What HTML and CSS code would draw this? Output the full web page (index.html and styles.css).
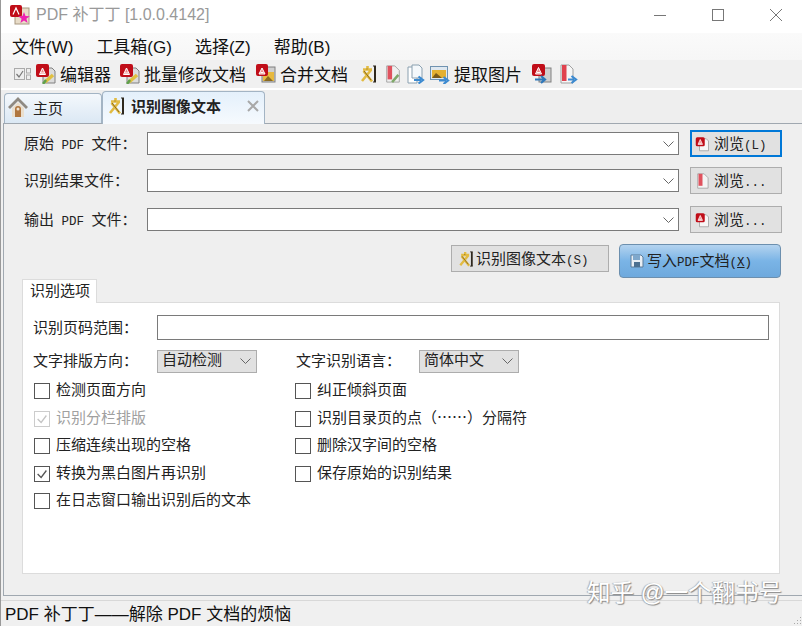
FILE: index.html
```html
<!DOCTYPE html>
<html>
<head>
    <title>PDF 补丁丁</title>
    <link rel="stylesheet" href="styles.css">
</head>
<body>
    <svg class="defs" width="0" height="0">
        <symbol id="ico-pdf" viewBox="0 0 20 20">
            <path d="M6 3h9l3 3v13H6z" fill="#f6f6f6" stroke="#9a9a9a"/>
            <rect x="1" y="1" width="12" height="12" rx="2" fill="#c00d18"/>
            <path d="M4 10.500 7 4l3 6.500zM5.500 9h3" fill="#e88" stroke="#fff"/>
        </symbol>
        <symbol id="ico-edit" viewBox="0 0 20 20">
            <path d="M7 4h9l3 3v12H7z" fill="#dcdcdc" stroke="#808080"/>
            <rect x="0" y="0" width="13" height="13" rx="2" fill="#c00d18"/>
            <path d="M3.500 10.500 6.500 4l3 6.500zM5 9h3" fill="#e88" stroke="#fff"/>
            <path d="M9 18l8-7" stroke="#e0c040" stroke-width="3.500"/>
            <path d="M7 20l3-4" stroke="#5fa04a" stroke-width="2.500"/>
        </symbol>
        <symbol id="ico-merge" viewBox="0 0 20 20">
            <rect x="6" y="3" width="13" height="15" fill="#cfcfcf" stroke="#7f7f7f"/>
            <rect x="7" y="8" width="11" height="9" fill="#e7b93e"/>
            <path d="M8 17l4-5 5 5z" fill="#8a6a20"/>
            <rect x="0" y="0" width="12" height="12" rx="2" fill="#c00d18"/>
            <path d="M3 10 6 4l3 6zM4.500 8.500h3" fill="#e88" stroke="#fff"/>
        </symbol>
        <symbol id="ico-ocr" viewBox="0 0 16 18">
            <path d="M2 4.500h9M6.500 1v3.500M1 16 10 5M2.500 6 11 16.500" fill="none" stroke="#e2bb42" stroke-width="2.600"/>
            <path d="M3 6l7 9M6 3.500v1" fill="none" stroke="#8a6a20"/>
            <path d="M14 1v16" stroke="#2e281e" stroke-width="2"/>
            <path d="M12 1h3M12 17h3" stroke="#2e281e"/>
        </symbol>
        <symbol id="ico-book" viewBox="0 0 16 20">
            <path d="M2 1h8l5 5v13H2z" fill="#f4f4f4" stroke="#a0a0a0"/>
            <rect x="3" y="1" width="5" height="15" fill="#e0525e"/>
        </symbol>
        <symbol id="ico-bookedit" viewBox="0 0 16 20">
            <path d="M1 1h9l5 5v13H1z" fill="#f0f0f0" stroke="#a0a0a0"/>
            <rect x="2" y="1" width="5" height="15" fill="#e0525e"/>
            <path d="M7 19l7-8" stroke="#7fa86a" stroke-width="2.800"/>
        </symbol>
        <symbol id="ico-docarrow" viewBox="0 0 18 20">
            <path d="M1 3h6l3 3v13H1z" fill="#fff" stroke="#8aa0b0"/>
            <path d="M5 1h7l3 3v10H5z" fill="#f4f8fb" stroke="#8aa0b0"/>
            <path d="M7 16h7M11.500 12.500l4.500 3.500-4.500 3.500" fill="none" stroke="#3c8ad0" stroke-width="2.200"/>
        </symbol>
        <symbol id="ico-imgarrow" viewBox="0 0 20 20">
            <rect x=".5" y="2.500" width="17" height="13" fill="#dfe8f0" stroke="#6f92b0"/>
            <rect x="2" y="6" width="14" height="8" fill="#e4b030"/>
            <path d="M2 14 6 9l6 5z" fill="#7a5a18"/>
            <path d="M9 16.500h7M13.500 13l4.500 3.500-4.500 3.500" fill="none" stroke="#3c8ad0" stroke-width="2.200"/>
        </symbol>
        <symbol id="ico-pdfarrow" viewBox="0 0 20 20">
            <rect x="7" y="4" width="12" height="14" fill="#d0d0d0" stroke="#808080"/>
            <rect x="0" y="0" width="13" height="12" rx="2" fill="#c00d18"/>
            <path d="M3.500 10 6.500 3.500l3 6.500zM5 8.500h3" fill="#e88" stroke="#fff"/>
            <path d="M3 15.500h9M9 12l4 3.500-4 3.500" fill="none" stroke="#2f78ba" stroke-width="2.200"/>
        </symbol>
        <symbol id="ico-bookarrow" viewBox="0 0 18 20">
            <path d="M1 1h8l4 4v14H1z" fill="#f6f6f6" stroke="#a0a0a0"/>
            <rect x="2" y="1" width="4.500" height="16" fill="#e0424e"/>
            <path d="M8 15.500h6M11.500 12l4.500 3.500-4.500 3.500" fill="none" stroke="#3c8ad0" stroke-width="2.200"/>
        </symbol>
        <symbol id="ico-chevron" viewBox="0 0 11 6">
            <path d="M.5.5 5.500 5.500 10.500.5" fill="none" stroke="#666"/>
        </symbol>
    </svg>

    <div class="window">
        <div class="titlebar">
            <svg class="app-icon" viewBox="0 0 20 20" width="20" height="20">
                <rect x="5" y="3" width="14" height="16" fill="#e8dcc8" stroke="#a89880"/>
                <rect x="0" y="0" width="12" height="12" rx="2" fill="#c00d18"/>
                <path d="M3 9.500 6 3l3 6.500" fill="none" stroke="#fff" stroke-width="1.200"/>
                <path d="M14 7l1.500 4 4.300.2-3.400 2.600 1.200 4.200-3.600-2.400-3.600 2.400 1.200-4.200-3.400-2.600 4.300-.2z" fill="#ee22b0"/>
            </svg>
            <span class="app-title">PDF 补丁丁 [1.0.0.4142]</span>
            <div class="controls">
                <svg width="12" height="12" viewBox="0 0 12 12"><path d="M0 6.500h12" stroke="#777"/></svg>
                <svg width="12" height="12" viewBox="0 0 12 12"><rect x=".5" y=".5" width="11" height="11" fill="none" stroke="#777"/></svg>
                <svg width="12" height="12" viewBox="0 0 12 12"><path d="M0 0l12 12M12 0 0 12" stroke="#777"/></svg>
            </div>
        </div>

        <div class="menubar">
            <span class="menu-item">文件(W)</span>
            <span class="menu-item">工具箱(G)</span>
            <span class="menu-item">选择(Z)</span>
            <span class="menu-item">帮助(B)</span>
        </div>

        <div class="toolbar">
            <svg class="tool-check" viewBox="0 0 17 12" width="17" height="12">
                <rect x=".5" y=".5" width="10" height="11" fill="#eee" stroke="#aaa"/>
                <path d="M2.500 6l2.500 3 4-6" fill="none" stroke="#777" stroke-width="1.200"/>
                <rect x="12.500" y=".5" width="4" height="4.500" fill="#eee" stroke="#aaa"/>
                <rect x="12.500" y="7" width="4" height="4.500" fill="#eee" stroke="#aaa"/>
            </svg>
            <span class="tool first"><svg class="ico"><use href="#ico-edit"/></svg>编辑器</span>
            <span class="tool"><svg class="ico"><use href="#ico-edit"/></svg>批量修改文档</span>
            <span class="tool sep-10"><svg class="ico"><use href="#ico-merge"/></svg>合并文档</span>
            <svg class="ico-sm sep-13"><use href="#ico-ocr"/></svg>
            <svg class="ico-sm sep-8"><use href="#ico-bookedit"/></svg>
            <svg class="ico-md sep-6"><use href="#ico-docarrow"/></svg>
            <span class="tool sep-5"><svg class="ico"><use href="#ico-imgarrow"/></svg>提取图片</span>
            <svg class="ico sep-10"><use href="#ico-pdfarrow"/></svg>
            <svg class="ico-md sep-8"><use href="#ico-bookarrow"/></svg>
        </div>

        <div class="tabstrip">
            <div class="tab tab-home">
                <svg viewBox="0 0 20 22" width="20" height="22">
                    <path d="M10 1 0 11l2 2 8-8 8 8 2-2z" fill="#8f8a82"/>
                    <path d="M4 12l6-6 6 6v9H4z" fill="#eadfce"/>
                    <path d="M7 21v-8a3 3 0 0 1 6 0v8z" fill="#b0763f"/>
                    <circle cx="10" cy="13" r="1.500" fill="#efe4d2"/>
                </svg>
                主页
            </div>
            <div class="tab tab-active">
                <svg class="ico-sm"><use href="#ico-ocr"/></svg>
                <span class="tab-name">识别图像文本</span>
                <svg class="tab-close" width="12" height="12" viewBox="0 0 12 12"><path d="M1 1l10 10M11 1 1 11" stroke="#a8a8a8" stroke-width="2"/></svg>
            </div>
        </div>

        <div class="pane">
            <div class="form">
                <div class="file-row">
                    <span class="file-label">原始<span class="mono"> PDF </span>文件：</span>
                    <div class="combo"><svg class="chev"><use href="#ico-chevron"/></svg></div>
                    <button class="btn browse focused"><svg class="ico-btn"><use href="#ico-pdf"/></svg><span>浏览<span class="mono">(L)</span></span></button>
                </div>
                <div class="file-row">
                    <span class="file-label">识别结果文件：</span>
                    <div class="combo"><svg class="chev"><use href="#ico-chevron"/></svg></div>
                    <button class="btn browse"><svg class="ico-btn"><use href="#ico-book"/></svg><span>浏览<span class="mono">...</span></span></button>
                </div>
                <div class="file-row row-3">
                    <span class="file-label">输出<span class="mono"> PDF </span>文件：</span>
                    <div class="combo"><svg class="chev"><use href="#ico-chevron"/></svg></div>
                    <button class="btn browse"><svg class="ico-btn"><use href="#ico-pdf"/></svg><span>浏览<span class="mono">...</span></span></button>
                </div>
                <div class="actions">
                    <button class="btn recognize"><svg class="ico-btn"><use href="#ico-ocr"/></svg><span>识别图像文本<span class="mono">(S)</span></span></button>
                    <button class="btn primary">
                        <svg viewBox="0 0 14 14" width="14" height="14">
                            <path d="M1 1h10l2 2v10H1z" fill="#e8eef4" stroke="#5a7a98"/>
                            <rect x="3" y="1" width="7" height="5" fill="#7fa8cc"/>
                            <rect x="4" y="8" width="6" height="5" fill="#4d7090"/>
                        </svg>
                        <span>写入<span class="mono">PDF</span>文档<span class="mono">(<u>X</u>)</span></span>
                    </button>
                </div>
            </div>

            <div class="options">
                <div class="options-tab">识别选项</div>
                <div class="options-panel">
                    <div class="opt-row">
                        <span class="opt-label">识别页码范围：</span>
                        <div class="page-range"></div>
                    </div>
                    <div class="opt-row row-select">
                        <span class="opt-label">文字排版方向：</span>
                        <div class="select">自动检测<svg class="chev"><use href="#ico-chevron"/></svg></div>
                        <span class="opt-label label-2">文字识别语言：</span>
                        <div class="select">简体中文<svg class="chev"><use href="#ico-chevron"/></svg></div>
                    </div>
                    <div class="checks">
                        <label class="check"><span class="box"></span>检测页面方向</label>
                        <label class="check"><span class="box"></span>纠正倾斜页面</label>
                        <label class="check disabled"><span class="box on"><svg viewBox="0 0 16 16"><path d="M3 8l4 4 6-8" fill="none" stroke="#c4c4c4" stroke-width="1.500"/></svg></span>识别分栏排版</label>
                        <label class="check"><span class="box"></span>识别目录页的点（⋯⋯）分隔符</label>
                        <label class="check"><span class="box"></span>压缩连续出现的空格</label>
                        <label class="check"><span class="box"></span>删除汉字间的空格</label>
                        <label class="check"><span class="box on"><svg viewBox="0 0 16 16"><path d="M3 8l4 4 6-8" fill="none" stroke="#555" stroke-width="1.500"/></svg></span>转换为黑白图片再识别</label>
                        <label class="check"><span class="box"></span>保存原始的识别结果</label>
                        <label class="check"><span class="box"></span>在日志窗口输出识别后的文本</label>
                    </div>
                </div>
            </div>
        </div>

        <div class="statusbar">PDF 补丁丁——解除 PDF 文档的烦恼</div>
        <div class="watermark">知乎 @一个翻书号</div>
        <svg class="grip" width="8" height="8" viewBox="0 0 8 8">
            <path d="M6 1h1v1H6zM3 4h1v1H3zM6 4h1v1H6zM0 7h1v1H0zM3 7h1v1H3zM6 7h1v1H6z" fill="#aaa"/>
        </svg>
    </div>
</body>
</html>
```

FILE: styles.css
```css
* {
    box-sizing: border-box;
}

body {
    margin: 0;
    font-family: "Liberation Sans", "Noto Sans CJK SC", sans-serif;
    font-size: 15px;
    color: #222;
    overflow: hidden;
}

.defs {
    display: block;
    height: 0;
}

.window {
    position: relative;
    width: 802px;
    height: 626px;
    display: flex;
    flex-direction: column;
    background-color: #f0f0f0;
    border-left: 1px solid #999;
}

.titlebar {
    height: 33px;
    flex: none;
    display: flex;
    align-items: center;
    background-color: #fff;
    padding: 0 20px 4px 9px;
}

.app-title {
    margin-left: 6px;
    padding-bottom: 3px;
    font-size: 16px;
    color: #999;
}

.controls {
    margin-left: auto;
    display: flex;
    gap: 46px;
}

.menubar {
    height: 27px;
    flex: none;
    display: flex;
    align-items: center;
    padding: 0 0 2px 11px;
    font-size: 17px;
    color: #111;
    background: linear-gradient(#fafafa, #f6f6f6);
}

.menu-item {
    margin-right: 23px;
}

.toolbar {
    height: 28px;
    flex: none;
    display: flex;
    align-items: center;
    padding-left: 13px;
    font-size: 17px;
    color: #111;
    background-color: #f0f0f0;
}

.tool {
    display: flex;
    align-items: center;
    gap: 4px;
    margin-left: 9px;
    padding-bottom: 2px;
}

.tool .ico {
    margin-top: 2px;
}

.tool.first {
    margin-left: 5px;
}

.sep-5 { margin-left: 5px; }
.sep-6 { margin-left: 6px; }
.sep-8 { margin-left: 8px; }
.sep-10 { margin-left: 10px; }
.sep-13 { margin-left: 13px; }

.ico {
    width: 20px;
    height: 20px;
    flex: none;
}

.ico-sm {
    width: 16px;
    height: 18px;
    flex: none;
}

.ico-md {
    width: 18px;
    height: 20px;
    flex: none;
}

.ico-btn {
    width: 15px;
    height: 16px;
    flex: none;
}

.tabstrip {
    height: 35px;
    flex: none;
    display: flex;
    align-items: flex-end;
    padding-left: 3px;
    background-color: #eee;
    border-top: 2px solid #fff;
    position: relative;
    z-index: 1;
}

.tab {
    display: flex;
    align-items: center;
    border: 1px solid #a3b4c4;
    border-radius: 4px 4px 0 0;
}

.tab-home {
    width: 98px;
    height: 30px;
    gap: 5px;
    padding: 0 0 3px 3px;
    background: linear-gradient(#f4f8fc, #dbe8f4);
    border-bottom: 0;
}

.tab-active {
    width: 163px;
    height: 33px;
    margin-bottom: -1px;
    padding: 0 0 5px 6px;
    background: linear-gradient(#e4f0fb, #f6fafe);
    border-bottom: 0;
}

.tab-name {
    margin-left: 6px;
    font-weight: 700;
}

.tab-close {
    margin-left: 26px;
}

.pane {
    flex: 1;
    min-height: 0;
    display: flex;
    flex-direction: column;
    margin-left: 2px;
    background-color: #efefef;
    border-top: 1px solid #a0a8b0;
    border-left: 1px solid #a0a8b0;
    border-bottom: 1px solid #a0a8b0;
}

.form {
    padding: 6px 20px 0 21px;
    flex: none;
}

.mono {
    font-family: "Liberation Mono", monospace;
    font-size: 12.500px;
}

.file-row {
    display: flex;
    align-items: center;
    height: 27px;
    margin-bottom: 10px;
}

.file-row.row-3 {
    margin-top: 12px;
    margin-bottom: 0;
}

.file-label {
    width: 123px;
    flex: none;
    margin-left: -1px;
    padding-bottom: 3px;
    white-space: pre;
}

.combo {
    width: 532px;
    height: 23px;
    flex: none;
    display: flex;
    align-items: center;
    justify-content: flex-end;
    padding-right: 4px;
    background-color: #fff;
    border: 1px solid #7a7a7a;
}

.chev {
    width: 11px;
    height: 6px;
    flex: none;
}

.btn {
    display: flex;
    align-items: center;
    border: 1px solid #adadad;
    background-color: #e1e1e1;
    font-family: inherit;
    font-size: 15px;
    color: #222;
    padding: 0 0 3px;
}

.btn svg {
    margin-top: 3px;
}

.browse {
    width: 92px;
    height: 27px;
    margin-left: 11px;
    padding-left: 4px;
    gap: 4px;
}

.browse.focused {
    border: 2px solid #0078d7;
    padding-left: 3px;
}

.actions {
    display: flex;
    justify-content: flex-end;
    align-items: flex-start;
    gap: 10px;
    margin-top: 11px;
    padding-right: 1px;
}

.recognize {
    width: 158px;
    height: 27px;
    margin-top: 1px;
    padding-left: 7px;
    gap: 2px;
}

.primary {
    width: 162px;
    height: 34px;
    padding-left: 10px;
    gap: 3px;
    border: 1px solid #6c8fae;
    border-radius: 4px;
    background: linear-gradient(#b4d3ef, #7ab4e6 50%, #6ea9dd);
}

.options {
    flex: 1;
    min-height: 0;
    display: flex;
    flex-direction: column;
    margin: 1px 22px 21px 18px;
}

.options-tab {
    width: 75px;
    height: 24px;
    margin-bottom: -1px;
    padding-left: 7px;
    line-height: 22px;
    background-color: #fff;
    border: 1px solid #dcdcdc;
    border-bottom: 0;
    position: relative;
    z-index: 1;
}

.options-panel {
    flex: 1;
    padding: 12px 10px 0 11px;
    background-color: #fff;
    border: 1px solid #dcdcdc;
}

.opt-row {
    display: flex;
    align-items: center;
}

.row-select {
    margin-top: 9px;
}

.opt-label {
    width: 124px;
    flex: none;
    margin-left: -1px;
    padding-bottom: 3px;
}

.label-2 {
    width: 123px;
    margin-left: 39px;
}

.page-range {
    width: 612px;
    height: 25px;
    background-color: #fff;
    border: 1px solid #7a7a7a;
}

.select {
    width: 100px;
    height: 23px;
    flex: none;
    display: flex;
    align-items: center;
    justify-content: space-between;
    padding: 0 5px 5px 4px;
    background-color: #e1e1e1;
    border: 1px solid #adadad;
}

.select .chev {
    margin-top: 5px;
}

.checks {
    display: grid;
    grid-template-columns: 261px 1fr;
    grid-auto-rows: 27.500px;
    margin-top: 2px;
}

.check {
    display: flex;
    align-items: center;
    gap: 7px;
    margin-left: -1px;
}

.check .box {
    margin-left: 1px;
    margin-right: -1px;
    margin-top: 5px;
}

.check.disabled {
    color: #a0a0a0;
}

.box {
    width: 16px;
    height: 16px;
    flex: none;
    background-color: #fff;
    border: 1px solid #555;
}

.box svg {
    display: block;
    width: 14px;
    height: 14px;
}

.disabled .box {
    border-color: #ccc;
}

.check:nth-child(n+9) {
    grid-column: 1 / span 2;
}

.statusbar {
    height: 26px;
    flex: none;
    margin-top: 4px;
    padding-left: 4px;
    font-size: 17px;
    line-height: 27px;
    color: #111;
    background-color: #f0f0f0;
    border-top: 1px solid #d8d8d8;
}

/* zhihu watermark sits over the status bar */
.watermark {
    position: absolute;
    right: 20px;
    bottom: 19px;
    font-size: 23.500px;
    line-height: 28px;
    color: #fff;
    text-shadow: 1px 1px 1px #888, -1px 0 1px #aaa;
}

.grip {
    position: absolute;
    right: 0;
    bottom: 2px;
}
```
